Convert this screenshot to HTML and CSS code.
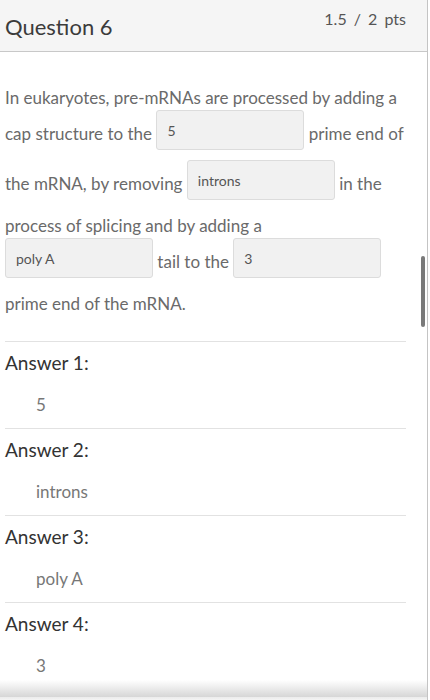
FILE: index.html
```html
<!DOCTYPE html>
<html lang="en">
<head>
	<meta charset="UTF-8">
	<meta name="viewport" content="width=device-width, initial-scale=1.0">
	<title>Question 6</title>
	<link rel="stylesheet" href="styles.css">
</head>
<body>

	<div class="quiz-card">
		<div class="question-header">
			<h2 class="question-title">Question 6</h2>
			<span class="question-points">1.5 / 2 pts</span>
		</div>

		<div class="question-body">
			<p class="question-text">In eukaryotes, pre-mRNAs are processed by adding a cap structure to the <span class="blank">5</span> prime end of the mRNA, by removing <span class="blank">introns</span> in the process of splicing and by adding a <span class="blank">poly A</span> tail to the <span class="blank">3</span> prime end of the mRNA.</p>

			<div class="answer">
				<div class="answer-label">Answer 1:</div>
				<div class="answer-value">5</div>
			</div>
			<div class="answer">
				<div class="answer-label">Answer 2:</div>
				<div class="answer-value">introns</div>
			</div>
			<div class="answer">
				<div class="answer-label">Answer 3:</div>
				<div class="answer-value">poly A</div>
			</div>
			<div class="answer">
				<div class="answer-label">Answer 4:</div>
				<div class="answer-value">3</div>
			</div>
		</div>

		<div class="scroll-thumb"></div>
	</div>

	<div class="bottom-shade"></div>

</body>
</html>
```

FILE: styles.css
```css
body {
	margin: 0;
	font-family: Lato, "Noto Sans", sans-serif;
	background-color: #fff;
	overflow: hidden;
}

.quiz-card {
	position: relative;
	width: 428px;
	box-sizing: border-box;
	border-right: 1px solid #c4c4c4;
	min-height: 700px;
}

.question-header {
	display: flex;
	justify-content: space-between;
	align-items: flex-start;
	height: 51px;
	padding: 0 21px 0 5px;
	background-color: #f5f5f5;
	border-bottom: 1px solid #c8c8c8;
}

.question-title {
	margin: 14px 0 0;
	font-size: 22px;
	line-height: 26px;
	font-weight: normal;
	color: #3b3b3b;
}

.question-points {
	margin-top: 9px;
	font-size: 16px;
	line-height: 20px;
	word-spacing: 3px;
	color: #555;
}

.question-body {
	padding: 32px 21px 0 5px;
}

.question-text {
	margin: 0 0 23px;
	font-size: 17px;
	line-height: 28px;
	color: #6a6a6a;
}

.blank {
	display: inline-block;
	width: 148px;
	height: 40px;
	box-sizing: border-box;
	margin: -2px 0 12px;
	padding: 10px 10px 0;
	vertical-align: 4px;
	font-size: 14px;
	line-height: 20px;
	color: #555;
	background-color: #f1f1f1;
	border: 1px solid #dcdcdc;
	border-radius: 3px;
}

.answer {
	border-top: 1px solid #e2e2e2;
	padding: 9px 0 11px;
}

.answer-label {
	font-size: 19px;
	line-height: 24px;
	color: #333;
}

.answer-value {
	margin-top: 18px;
	padding-left: 31px;
	font-size: 17px;
	line-height: 24px;
	color: #777;
}

.scroll-thumb {
	position: absolute;
	top: 256px;
	right: 2px;
	width: 4px;
	height: 71px;
	border-radius: 2px;
	background-color: #7a7a7a;
}

.bottom-shade {
	position: fixed;
	left: 0;
	bottom: 0;
	width: 427px;
	height: 20px;
	background: linear-gradient(#fff, #d6d6d6 85%, #ececec 86%, #f4f4f4);
}
```
